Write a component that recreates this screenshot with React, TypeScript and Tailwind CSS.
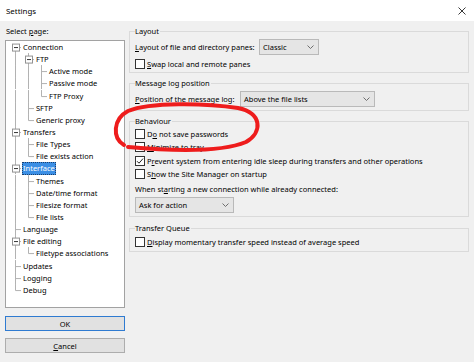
import React from "react";

type Cell = "pipe" | "none" | "tee" | "ell" | "first";
type Node = { label: string; cells: Cell[]; exp?: boolean; sel?: boolean };

const tree: Node[] = [
  { label: "Connection", cells: ["first"], exp: true },
  { label: "FTP", cells: ["pipe", "tee"], exp: true },
  { label: "Active mode", cells: ["pipe", "pipe", "tee"] },
  { label: "Passive mode", cells: ["pipe", "pipe", "tee"] },
  { label: "FTP Proxy", cells: ["pipe", "pipe", "ell"] },
  { label: "SFTP", cells: ["pipe", "tee"] },
  { label: "Generic proxy", cells: ["pipe", "ell"] },
  { label: "Transfers", cells: ["tee"], exp: true },
  { label: "File Types", cells: ["pipe", "tee"] },
  { label: "File exists action", cells: ["pipe", "ell"] },
  { label: "Interface", cells: ["tee"], exp: true, sel: true },
  { label: "Themes", cells: ["pipe", "tee"] },
  { label: "Date/time format", cells: ["pipe", "tee"] },
  { label: "Filesize format", cells: ["pipe", "tee"] },
  { label: "File lists", cells: ["pipe", "ell"] },
  { label: "Language", cells: ["tee"] },
  { label: "File editing", cells: ["tee"], exp: true },
  { label: "Filetype associations", cells: ["pipe", "ell"] },
  { label: "Updates", cells: ["tee"] },
  { label: "Logging", cells: ["tee"] },
  { label: "Debug", cells: ["ell"] },
];

const LINE = "#b2b2b2";

function TreeCell({ kind, exp }: { kind: Cell; exp?: boolean }) {
  return (
    <svg width="13" height="12" viewBox="0 0 13 12" className="shrink-0 h-full">
      {(kind === "pipe" || kind === "tee") && <line x1="6.5" y1="0" x2="6.5" y2="12" stroke={LINE} />}
      {kind === "ell" && <line x1="6.5" y1="0" x2="6.5" y2="6.5" stroke={LINE} />}
      {kind === "first" && <line x1="6.5" y1="6" x2="6.5" y2="12" stroke={LINE} />}
      {kind !== "pipe" && kind !== "none" && <line x1="6.5" y1="6.5" x2="12" y2="6.5" stroke={LINE} />}
      {exp && (
        <>
          <rect x="3.5" y="3" width="7" height="7" fill="white" stroke="#929292" />
          <line x1="5" y1="6.5" x2="9" y2="6.5" stroke="#333" />
        </>
      )}
    </svg>
  );
}

function Checkbox({ checked }: { checked?: boolean }) {
  return (
    <span className="w-[10px] h-[10px] border border-[#333] bg-white shrink-0 flex items-center justify-center">
      {checked && (
        <svg width="8" height="8" viewBox="0 0 8 8">
          <path d="M1 4.2 L3 6.2 L7 1.6" fill="none" stroke="#222" strokeWidth="1" />
        </svg>
      )}
    </span>
  );
}

function Check({ children, checked, className = "" }: { children: React.ReactNode; checked?: boolean; className?: string }) {
  return (
    <div className={`flex items-center gap-[2px] ${className}`}>
      <Checkbox checked={checked} />
      <span className="leading-[12px] whitespace-nowrap">{children}</span>
    </div>
  );
}

function Combo({ value, className }: { value: string; className: string }) {
  return (
    <div className={`h-[16px] bg-[#e5e5e5] border border-[#b9b9b9] flex items-center justify-between pl-[3px] pr-[4px] ${className}`}>
      <span className="leading-[12px] whitespace-nowrap">{value}</span>
      <svg width="7" height="4" viewBox="0 0 7 4">
        <path d="M0.5 0.5 L3.5 3.5 L6.5 0.5" fill="none" stroke="#606060" strokeWidth="0.9" />
      </svg>
    </div>
  );
}

function Group({ title, className = "", children }: { title: string; className?: string; children: React.ReactNode }) {
  return (
    <fieldset className={`border border-[#dadada] px-[5px] ${className}`}>
      <legend className="leading-[12px] h-[12px] whitespace-nowrap pr-[1px]">{title}</legend>
      {children}
    </fieldset>
  );
}

export default function App() {
  return (
    <div
      className="relative w-[474px] h-[362px] overflow-hidden bg-[#f0f0f0] text-black flex flex-col text-[7.5px]"
      style={{ fontFamily: '"Noto Sans", "Open Sans", sans-serif' }}
    >
      {/* title bar */}
      <div className="h-[21px] bg-white flex items-center justify-between pl-[6px] pr-[8px] shrink-0">
        <span className="text-[7.9px] leading-[12px]">Settings</span>
        <svg width="8" height="8" viewBox="0 0 8 8">
          <path d="M0.5 0.5 L7.5 7.5 M7.5 0.5 L0.5 7.5" stroke="#222" strokeWidth="0.9" />
        </svg>
      </div>

      <div className="flex flex-1">
        {/* left column */}
        <div className="w-[120px] ml-[5px] flex flex-col">
          <div className="mt-[4px] h-[12px] leading-[12px] pl-[1px]">
            Select <span className="underline">p</span>age:
          </div>
          <div className="mt-[3px] h-[268px] bg-white border border-[#a2a2a2] pl-[3px] overflow-hidden">
            {tree.map((n) => (
              <div key={n.label} className="flex items-stretch h-[12.15px]">
                {n.cells.map((c, i) => (
                  <TreeCell key={i} kind={c} exp={i === n.cells.length - 1 ? n.exp : undefined} />
                ))}
                <span
                  className={`px-[1px] leading-[12px] whitespace-nowrap ${
                    n.sel ? "bg-[#3b8fe5] text-white outline outline-1 outline-dotted outline-[#1c3f6a] -outline-offset-1" : ""
                  }`}
                >
                  {n.label}
                </span>
              </div>
            ))}
          </div>
          <button className="mt-[8px] h-[15px] bg-[#e1e1e1] border border-[#2f7bd1] flex items-center justify-center leading-[12px]">
            OK
          </button>
          <button className="mt-[7px] h-[15px] bg-[#e1e1e1] border border-[#adadad] flex items-center justify-center leading-[12px]">
            <span>
              <span className="underline">C</span>ancel
            </span>
          </button>
        </div>

        {/* right column */}
        <div className="w-[340px] ml-[4px] flex flex-col">
          <Group title="Layout" className="mt-[4px] pb-[2px]">
            <div className="mt-[2px] h-[16px] flex items-center">
              <span className="w-[124px] leading-[12px] whitespace-nowrap">
                <span className="underline">L</span>ayout of file and directory panes:
              </span>
              <Combo value="Classic" className="w-[60px]" />
            </div>
            <Check className="mt-[2px] h-[13px]">
              <span className="underline">S</span>wap local and remote panes
            </Check>
          </Group>

          <Group title="Message log position" className="mt-[4px] pb-[3px]">
            <div className="mt-[2px] h-[16px] flex items-center">
              <span className="w-[105px] leading-[12px] whitespace-nowrap">
                <span className="underline">P</span>osition of the message log:
              </span>
              <Combo value="Above the file lists" className="w-[135px]" />
            </div>
          </Group>

          <Group title="Behaviour" className="mt-[4px] pb-[3px]">
            <Check className="h-[13.5px]">
              D<span className="underline">o</span> not save passwords
            </Check>
            <Check className="h-[13.5px]">
              <span className="underline">M</span>inimize to tray
            </Check>
            <Check className="h-[13.5px]" checked>
              P<span className="underline">r</span>event system from entering idle sleep during transfers and other operations
            </Check>
            <Check className="h-[13.5px]">
              S<span className="underline">h</span>ow the Site Manager on startup
            </Check>
            <div className="mt-[1.5px] h-[13px] flex items-center leading-[12px] whitespace-nowrap">
              When st<span className="underline">a</span>rting a new connection while already connected:
            </div>
            <Combo value="Ask for action" className="mt-[1.5px] w-[99px]" />
          </Group>

          <Group title="Transfer Queue" className="mt-[5px] pb-[2.5px]">
            <Check className="mt-[1.5px] h-[13px]">
              <span className="underline">D</span>isplay momentary transfer speed instead of average speed
            </Check>
          </Group>
        </div>
      </div>

      {/* red freehand annotation */}
      <svg className="absolute inset-0 pointer-events-none" width="474" height="362" viewBox="0 0 474 362">
        <path
          d="M124 145 C112 138 113 119 128 111 C150 102 205 103 238 108 C262 113 263 132 246 142 C222 152 172 151 128 147"
          fill="none"
          stroke="#ee1c1c"
          strokeWidth="4"
          strokeLinecap="round"
          strokeLinejoin="round"
        />
      </svg>
    </div>
  );
}
